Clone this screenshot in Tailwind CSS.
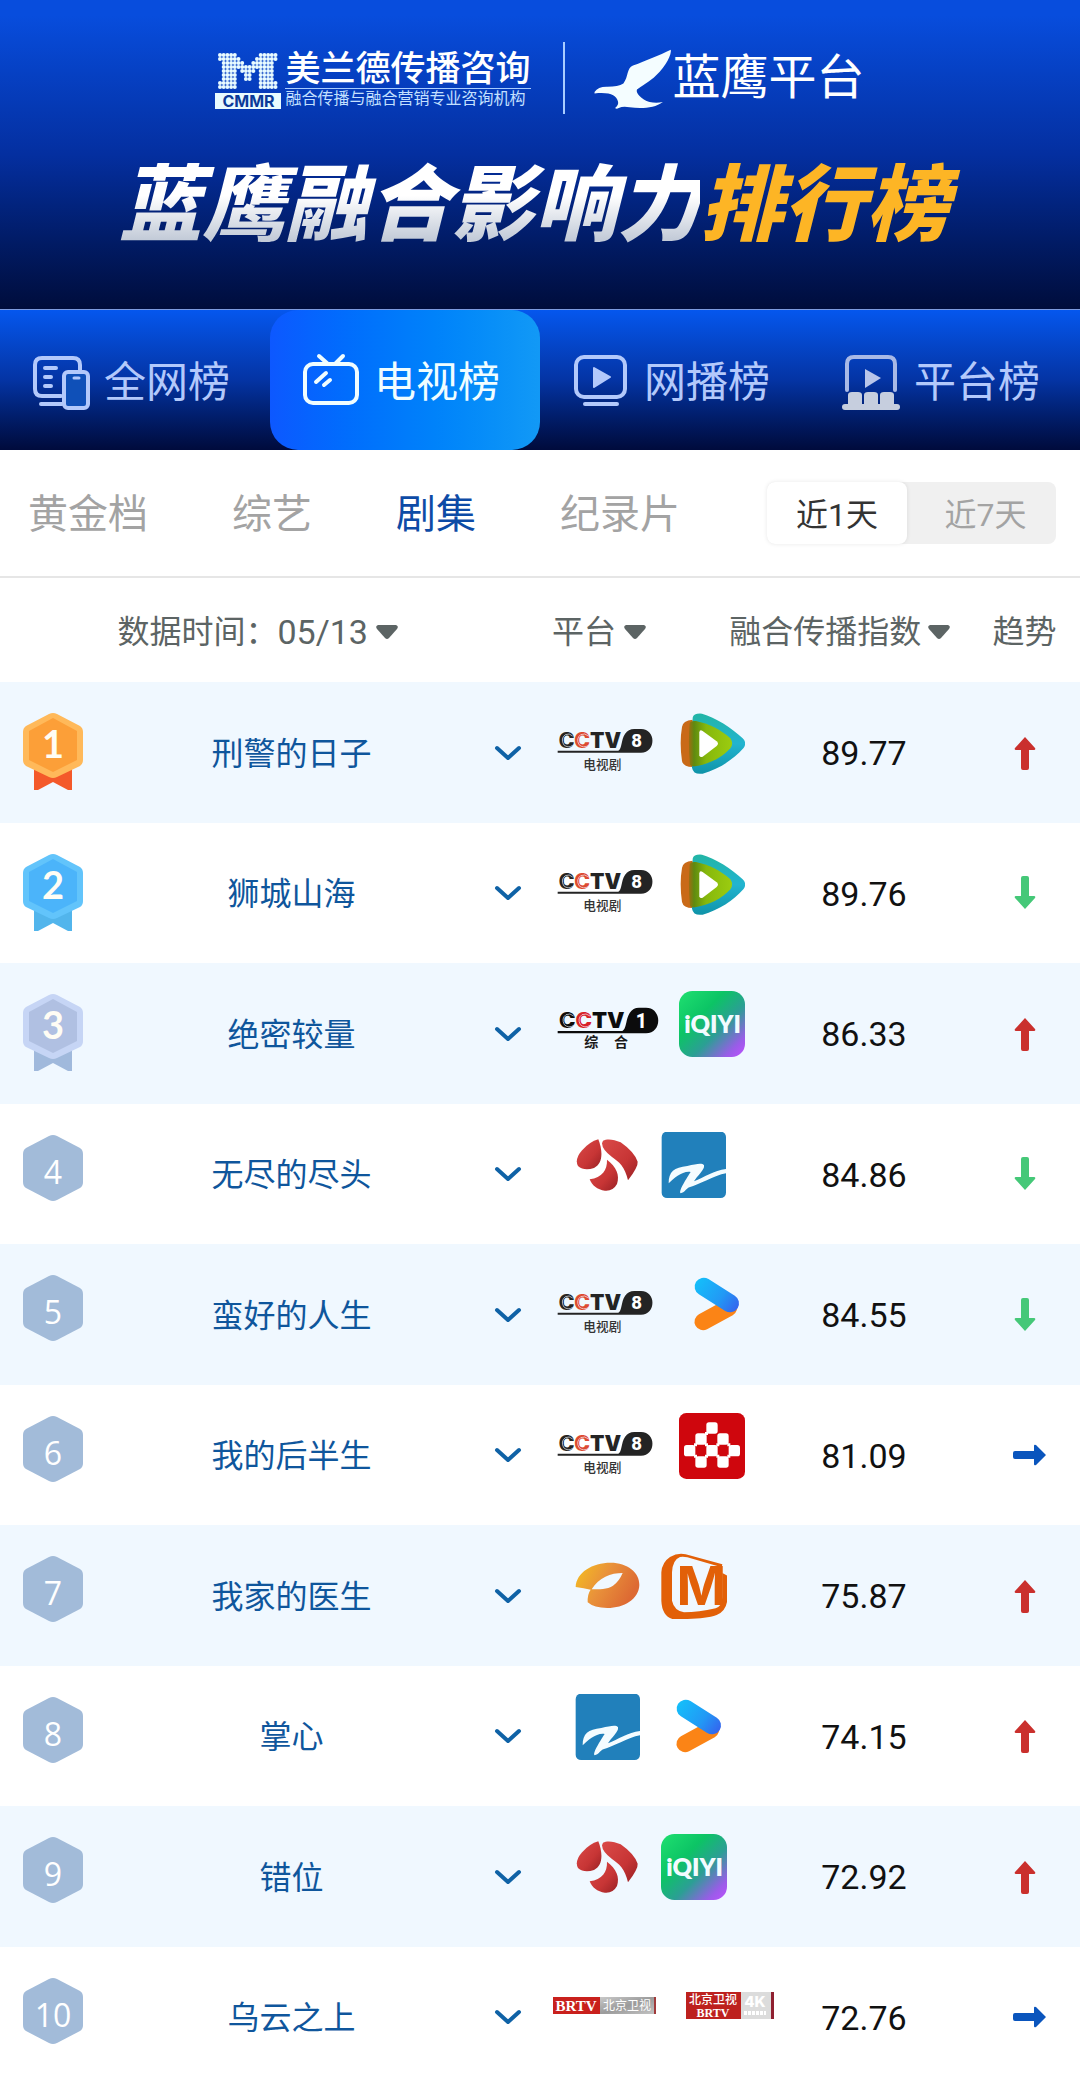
<!DOCTYPE html>
<html lang="zh-CN">

<head>
    <meta charset="UTF-8" />
    <meta name="viewport" content="width=device-width, initial-scale=1.0" />
    <title>蓝鹰融合影响力排行榜</title>
    <script src="https://cdn.jsdelivr.net/npm/@tailwindcss/browser@4"></script>
    <style>
        body {
            font-family: Roboto, 'Noto Sans CJK SC', sans-serif;
        }
    </style>
</head>

<body class="bg-white">
    <!-- Degradados de los logos -->
    <svg class="absolute w-0 h-0" aria-hidden="true">
        <defs>
            <linearGradient id="g-iqiyi" x1="0" y1="0" x2="1" y2="1">
                <stop offset="0" stop-color="#1fe070" />
                <stop offset="0.35" stop-color="#0cc465" />
                <stop offset="0.6" stop-color="#2b9f94" />
                <stop offset="0.85" stop-color="#9a5ce8" />
                <stop offset="1" stop-color="#c050ff" />
            </linearGradient>
            <linearGradient id="g-youku" gradientUnits="userSpaceOnUse" x1="475" y1="90" x2="600" y2="180">
                <stop offset="0" stop-color="#14c0fa" />
                <stop offset="0.6" stop-color="#2299f5" />
                <stop offset="1" stop-color="#3563ee" />
            </linearGradient>
            <linearGradient id="g-hunan" x1="0" y1="0" x2="1" y2="0.4">
                <stop offset="0" stop-color="#f5c020" />
                <stop offset="0.5" stop-color="#e9923a" />
                <stop offset="1" stop-color="#dd6a33" />
            </linearGradient>
            <linearGradient id="g-teal" x1="0" y1="0" x2="0" y2="1">
                <stop offset="0" stop-color="#22b5a5" />
                <stop offset="0.5" stop-color="#22b4d0" />
                <stop offset="1" stop-color="#0f93a8" />
            </linearGradient>
            <linearGradient id="g-green" x1="0" y1="0" x2="1" y2="0">
                <stop offset="0" stop-color="#a06c12" />
                <stop offset="0.12" stop-color="#5f8a10" />
                <stop offset="0.4" stop-color="#86b80c" />
                <stop offset="1" stop-color="#9ccc10" />
            </linearGradient>
            <linearGradient id="g-red" x1="0" y1="0" x2="1" y2="1">
                <stop offset="0" stop-color="#da4a48" />
                <stop offset="0.6" stop-color="#c73535" />
                <stop offset="1" stop-color="#982024" />
            </linearGradient>
            <linearGradient id="g-silver" x1="0" y1="0" x2="1" y2="1">
                <stop offset="0" stop-color="#c9c9c9" />
                <stop offset="0.5" stop-color="#9b9b9b" />
                <stop offset="1" stop-color="#c4c4c4" />
            </linearGradient>
        </defs>
    </svg>

    <header class="bg-linear-to-b from-[#084ddd] from-5% via-[#042fa0] via-50% to-[#000d3c] border-b border-[#7d9be0] pt-[42px] pb-[51px]">
        <div class="flex justify-center items-center text-white">
            <div class="flex items-end gap-1 pt-1">
                <div class="flex flex-col items-center gap-1">
                    <svg id="logo-dots" class="w-[60px] h-[36px]" viewBox="0 0 60 36" fill="#e8fbff"></svg>
                    <span class="w-[66px] h-4 bg-[#e8fbff] text-[#0a3a98] text-center text-base leading-4 font-bold font-['Inter']">CMMR</span>
                </div>
                <div>
                    <p class="text-[35px] leading-9 font-medium">美兰德传播咨询</p>
                    <p class="border-t border-[#a8ccff] text-base leading-5 text-[#c4e0ff]">融合传播与融合营销专业咨询机构</p>
                </div>
            </div>
            <div class="w-0.5 h-[72px] bg-[#a8ccff] ml-8 mr-7"></div>
            <svg class="w-[80px] h-[63px]" viewBox="155 30 240 190" fill="#f4fdff">
                <path d="M159 166Q170 149 198 150Q230 150 246 140C262 120 255 95 275 86C310 72 355 55 389 38C392 50 375 88 345 115C325 135 300 148 287 158C282 168 300 188 325 196Q345 201 365 196C340 215 300 217 265 212Q245 208 232 214Q225 218 221 214Q232 205 230 195C225 175 205 165 159 170Z" />
            </svg>
            <p class="text-5xl leading-14">蓝鹰平台</p>
        </div>
        <h1 class="mt-10 pr-3 text-center text-[83px] leading-[104px] font-black italic whitespace-nowrap"><span class="bg-linear-to-b from-white from-40% to-[#c3cbd8] to-85% bg-clip-text text-transparent">蓝鹰融合影响力</span><span class="text-[#fdb525]">排行榜</span></h1>
    </header>

    <nav class="grid grid-cols-4 h-[140px] bg-linear-to-b from-[#0557ee] via-[#0434a4] via-50% to-[#000b3c] text-[42px] text-[#b3c9fb]">
        <button class="flex items-center justify-center gap-3.5 pt-1 pr-2">
            <svg class="w-[58px] h-[58px]" viewBox="0 0 58 58" fill="none" stroke="currentColor" stroke-width="4" stroke-linecap="round">
                <path d="M48 18V12Q48 5 41 5H10Q3 5 3 12V36Q3 43 10 43H29M13 15H24M13 24H19M13 33H19M9 51H30" />
                <rect x="32" y="19" width="24" height="36" rx="4" fill="#0f50b8" />
                <path d="M42 25H47" stroke-width="3" />
            </svg>
            全网榜
        </button>
        <button class="flex items-center justify-center gap-3.5 pt-1 pr-2 rounded-[28px] bg-linear-to-r from-[#0d58ff] to-[#1299f6] text-[#f0fdff]">
            <svg class="w-[58px] h-[58px]" viewBox="0 0 58 58" fill="none" stroke="currentColor" stroke-width="4" stroke-linecap="round">
                <rect x="3" y="11" width="52" height="39" rx="8" />
                <path d="M17 3L26 11M41 3L33 11M14 29L24 20M22 32L28 27" />
            </svg>
            电视榜
        </button>
        <button class="flex items-center justify-center gap-3.5 pt-1 pr-2">
            <svg class="w-[58px] h-[58px]" viewBox="0 0 58 58" fill="none" stroke="currentColor" stroke-width="4" stroke-linecap="round">
                <rect x="4" y="4" width="49" height="40" rx="8" />
                <path d="M13 51H45" />
                <path d="M22 15L38 24L22 34Z" fill="currentColor" stroke-width="2" stroke-linejoin="round" />
            </svg>
            网播榜
        </button>
        <button class="flex items-center justify-center gap-3.5 pt-1 pr-2">
            <svg class="w-[58px] h-[58px]" viewBox="0 0 58 58" fill="none" stroke="#a9b9e6" stroke-width="4" stroke-linecap="round">
                <path d="M5 37V11Q5 4 12 4H46Q53 4 53 11V37" />
                <path d="M23 16L39 25L23 35Z" fill="#b9c6ea" stroke="none" />
                <path d="M3 54H55" stroke="#c6cede" stroke-width="6" />
                <path d="M6 42Q6 39 10 39H16Q20 39 20 42V52H6ZM22 42Q22 39 26 39H32Q36 39 36 42V52H22ZM38 42Q38 39 42 39H48Q52 39 52 42V52H38Z" fill="#c6cede" stroke="none" />
            </svg>
            平台榜
        </button>
    </nav>

    <div class="flex items-center justify-between h-32 pl-7 pr-6 border-b-2 border-[#e6e6e6] text-[40px] text-[#a3a3a3]">
        <div class="flex gap-[84px] pt-1">
            <button>黄金档</button>
            <button>综艺</button>
            <button class="text-[#0d4ba6]">剧集</button>
            <button>纪录片</button>
        </div>
        <div class="flex items-center rounded-lg bg-[#f0f0f0] text-[32px]">
            <button class="w-[140px] h-[62px] pt-1 rounded-lg bg-white text-[#333333] shadow-[0_0_4px_#00000018]">近1天</button>
            <button class="w-[149px] h-[60px] pt-1 pl-2">近7天</button>
        </div>
    </div>

    <table class="w-full table-fixed text-center">
        <colgroup>
            <col class="w-[10%]" />
            <col class="w-[34%]" />
            <col class="w-[6%]" />
            <col class="w-[21%]" />
            <col class="w-[18%]" />
            <col class="w-[11%]" />
        </colgroup>
        <thead class="text-[32px] text-[#5c6464] whitespace-nowrap">
            <tr class="h-[104px]">
                <th colspan="3" class="pt-1 font-normal">
                    <div class="flex items-center justify-center gap-1.5 pr-6">
                        <span class="flex items-center"><label for="fecha">数据时间：</label><select id="fecha" class="appearance-none text-[34px]"><option>05/13</option></select></span>
                        <svg class="w-6 h-4" viewBox="0 0 24 16" fill="currentColor"><path d="M3 1H21Q24 2 22 5L14 14Q12 16 10 14L2 5Q0 2 3 1Z" /></svg>
                    </div>
                </th>
                <th class="pt-1 font-normal">
                    <div class="flex items-center gap-1.5 pl-3">
                        <select aria-label="平台" class="appearance-none"><option>平台</option></select>
                        <svg class="w-6 h-4" viewBox="0 0 24 16" fill="currentColor"><path d="M3 1H21Q24 2 22 5L14 14Q12 16 10 14L2 5Q0 2 3 1Z" /></svg>
                    </div>
                </th>
                <th class="pt-1 font-normal">
                    <div class="flex justify-end pr-2.5">
                        <button class="flex shrink-0 items-center gap-1.5">融合传播指数
                            <svg class="w-6 h-4" viewBox="0 0 24 16" fill="currentColor"><path d="M3 1H21Q24 2 22 5L14 14Q12 16 10 14L2 5Q0 2 3 1Z" /></svg>
                        </button>
                    </div>
                </th>
                <th class="pt-1 pl-2 font-normal">趋势</th>
            </tr>
        </thead>
        <tbody id="ranking-body"></tbody>
    </table>

    <script>
        // Puntos del logotipo
        const puntos = [
            "11111......11111",
            "111111....111111",
            ".111111..111111.",
            ".11111111111111.",
            ".1111.1111.1111.",
            ".1111..11..1111.",
            ".1111..11..1111.",
            "11111......11111",
            "11111......11111"
        ];
        document.getElementById("logo-dots").innerHTML = puntos.map((fila, y) =>
            [...fila].map((p, x) => p === "1" ? `<circle cx="${2 + x * 3.7}" cy="${2 + y * 4}" r="2" />` : "").join("")
        ).join("");

        // Logos de plataformas
        const logos = {
            cctv8: `<svg class="w-[102px] h-[66px] shrink-0" viewBox="54 27 306 198">
                <text x="59" y="140" font-family="Inter, sans-serif" font-weight="900" font-size="63" fill="#242424">C<tspan fill="#dd4a33">C</tspan>TV</text>
                <g fill="none" stroke="#f4f8fc" stroke-width="2">
                    <path d="M101 105Q91 95 79 101Q64 112 74 131Q87 143 101 133" />
                    <path d="M149 105Q137 95 125 101Q110 112 120 131Q133 143 149 133" />
                </g>
                <path d="M56 149H238C249 145 246 116 258 99Q268 84 286 84H306C352 84 352 155 306 155H56Z" fill="#242424" />
                <text x="293" y="138" text-anchor="middle" font-family="Roboto, sans-serif" font-weight="800" font-size="56" fill="#fff">8</text>
                <text x="190" y="203" text-anchor="middle" font-family="'Noto Sans CJK SC', sans-serif" font-weight="500" font-size="38" fill="#333">电视剧</text>
            </svg>`,
            cctv1: `<svg class="w-[102px] h-[66px] shrink-0" viewBox="46 63 306 198">
                <text x="52" y="173" font-family="Inter, sans-serif" font-weight="900" font-size="66" fill="#0c0c0c">C<tspan fill="#d8202a">C</tspan>TV</text>
                <g fill="none" stroke="#f4f8fc" stroke-width="2">
                    <path d="M96 138Q85 128 73 134Q58 145 68 164Q81 176 96 166" />
                    <path d="M145 138Q133 128 121 134Q106 145 116 164Q129 176 145 166" />
                </g>
                <path d="M48 183H242C255 177 252 147 264 129Q274 113 292 113H313C362 113 362 190 313 190H48Z" fill="#0c0c0c" />
                <text x="299" y="173" text-anchor="middle" font-family="Roboto, sans-serif" font-weight="800" font-size="58" fill="#fff">1</text>
                <g font-family="'Noto Sans CJK SC', sans-serif" font-weight="700" font-size="42" fill="#1a1a1a">
                    <text x="128" y="231">综</text>
                    <text x="217" y="231">合</text>
                </g>
            </svg>`,
            tencent: `<svg class="w-[66px] h-[66px] shrink-0" viewBox="421 27 198 198">
                <path d="M462 56Q432 58 430 78Q422 125 430 180Q434 198 462 198Z" fill="#c96a18" />
                <path d="M462 50Q465 36 490 38C530 50 580 80 612 112Q626 126 614 142C585 175 540 205 492 218Q464 222 460 200Z" fill="url(#g-teal)" />
                <path d="M453 68Q454 58 472 60C510 68 545 85 575 112Q586 128 575 142C550 170 515 188 470 196Q456 198 454 190Q448 128 453 68Z" fill="url(#g-green)" />
                <path d="M482 94Q483 84 492 90L534 121Q542 128 534 135L492 167Q483 171 482 163Z" fill="#fff" />
            </svg>`,
            iqiyi: `<svg class="w-[66px] h-[66px] shrink-0" viewBox="421 63 198 198">
                <rect x="421" y="63" width="198" height="198" rx="40" fill="url(#g-iqiyi)" />
                <text x="522" y="188" text-anchor="middle" font-family="Lato, sans-serif" font-weight="800" font-size="72" fill="#f2fbff">iQIYI</text>
            </svg>`,
            jiangsu: `<svg class="w-[66px] h-[66px] shrink-0" viewBox="108 486 198 198" fill="url(#g-red)">
                <path d="M178 508C192 545 192 580 165 594Q135 604 117 588Q106 568 128 542Q152 515 178 508Z" />
                <path d="M192 512C205 505 225 508 245 517Q285 545 296 575Q298 590 267 631C258 590 240 575 218 560Q190 540 189 520Z" />
                <path d="M204 569C232 590 243 615 234 642Q222 664 198 662C175 660 158 645 152 628C190 622 205 600 204 569Z" />
            </svg>`,
            zhejiang: `<svg class="w-[66px] h-[66px] shrink-0" viewBox="361 486 198 198">
                <rect x="363" y="485" width="193" height="199" rx="16" fill="#2180bb" />
                <path d="M384 640C384 605 400 592 440 588C468 582 484 578 490 586C494 598 468 620 460 634C490 622 520 602 556 597V610C520 616 475 645 446 652C436 656 432 668 420 670C412 664 440 622 450 606C425 602 400 625 384 640Z" fill="#f4fcff" />
            </svg>`,
            youku: `<svg class="w-[66px] h-[66px] shrink-0" viewBox="423 69 198 198" fill="none" stroke-linecap="round">
                <path d="M495 218L572 176" stroke="#fb8416" stroke-width="51" />
                <path d="M497 113L576 163" stroke="url(#g-youku)" stroke-width="54" />
            </svg>`,
            yangshipin: `<svg class="w-[66px] h-[66px] shrink-0" viewBox="423 490 198 198" fill="#fff">
                <rect x="423" y="490" width="198" height="198" rx="22" fill="#cf060d" />
                <rect x="505" y="518" width="34" height="34" rx="8" />
                <rect x="472" y="551" width="34" height="34" rx="8" />
                <rect x="538" y="551" width="34" height="34" rx="8" />
                <rect x="438" y="586" width="34" height="34" rx="8" />
                <rect x="505" y="586" width="34" height="34" rx="8" />
                <rect x="572" y="586" width="34" height="34" rx="8" />
                <rect x="472" y="620" width="34" height="34" rx="8" />
                <rect x="538" y="620" width="34" height="34" rx="8" />
                <path d="M501 547h9v9h-9zM535 581h9v9h-9zM501 581h9v9h-9zM468 581h9v9h-9zM568 581h9v9h-9zM468 615h9v9h-9zM501 615h9v9h-9zM535 615h9v9h-9zM568 615h9v9h-9z" />
            </svg>`,
            hunan: `<svg class="w-[66px] h-[66px] shrink-0" viewBox="108 72 198 198">
                <path fill-rule="evenodd" d="M110 174C112 130 160 101 215 101C265 101 302 130 301 168C300 210 255 237 205 237Q165 237 146 220Q145 195 155 182Q135 178 110 174ZM158 181C180 180 205 182 222 170Q240 158 251 132C215 132 180 145 158 181Z" fill="url(#g-hunan)" />
            </svg>`,
            mango: `<svg class="w-[66px] h-[66px] shrink-0" viewBox="361 72 198 198" fill="#e26008">
                <path d="M545 106L435 76Q412 70 388 84Q364 100 362 130V215Q364 260 395 270H440C480 268 505 266 528 258Q558 245 560 210V140L545 132V205Q544 232 525 238C490 246 460 250 430 250Q400 244 394 215V130Q396 92 418 84Q428 82 440 85L543 115Z" />
                <text x="482" y="228" text-anchor="middle" font-family="Inter, sans-serif" font-weight="700" font-size="160">M</text>
            </svg>`,
            brtv: `<svg class="w-[103px] h-[66px] shrink-0" viewBox="0 0 103 66">
                <rect x="0" y="22" width="47" height="17" fill="#c9201c" />
                <rect x="47" y="22" width="56" height="17" fill="url(#g-silver)" />
                <rect x="101" y="22" width="2" height="17" fill="#a03a3a" />
                <text x="23" y="36" text-anchor="middle" font-family="'Liberation Serif', serif" font-weight="700" font-size="15" fill="#fff">BRTV</text>
                <text x="74" y="35" text-anchor="middle" font-family="'Noto Sans CJK SC', sans-serif" font-size="12" fill="#fff">北京卫视</text>
            </svg>`,
            brtv4k: `<svg class="w-[98px] h-[66px] shrink-0" viewBox="0 0 98 66">
                <rect x="10" y="17" width="55" height="27" fill="#bd211e" />
                <rect x="65" y="17" width="30" height="27" fill="#dcdcdc" />
                <rect x="95" y="17" width="3" height="27" fill="#8f2030" />
                <text x="37" y="29" text-anchor="middle" font-family="'Noto Sans CJK SC', sans-serif" font-weight="500" font-size="12" fill="#fff">北京卫视</text>
                <text x="37" y="42" text-anchor="middle" font-family="'Liberation Serif', serif" font-weight="700" font-size="12" fill="#fff">BRTV</text>
                <text x="79" y="32" text-anchor="middle" font-family="Inter, sans-serif" font-weight="800" font-size="15" fill="#fff">4K</text>
                <path d="M68 38H90" stroke="#fff" stroke-width="4" stroke-dasharray="3 1" />
            </svg>`
        };

        const series = [
            { nombre: "刑警的日子", logos: ["cctv8", "tencent"], indice: "89.77", tendencia: "up" },
            { nombre: "狮城山海", logos: ["cctv8", "tencent"], indice: "89.76", tendencia: "down" },
            { nombre: "绝密较量", logos: ["cctv1", "iqiyi"], indice: "86.33", tendencia: "up" },
            { nombre: "无尽的尽头", logos: ["jiangsu", "zhejiang"], indice: "84.86", tendencia: "down" },
            { nombre: "蛮好的人生", logos: ["cctv8", "youku"], indice: "84.55", tendencia: "down" },
            { nombre: "我的后半生", logos: ["cctv8", "yangshipin"], indice: "81.09", tendencia: "same" },
            { nombre: "我家的医生", logos: ["hunan", "mango"], indice: "75.87", tendencia: "up" },
            { nombre: "掌心", logos: ["zhejiang", "youku"], indice: "74.15", tendencia: "up" },
            { nombre: "错位", logos: ["jiangsu", "iqiyi"], indice: "72.92", tendencia: "up" },
            { nombre: "乌云之上", logos: ["brtv", "brtv4k"], indice: "72.76", tendencia: "same" }
        ];

        const medallas = [
            { borde: "#ffb95a", fondo: "#fc9f38", cinta: "#f4592a" },
            { borde: "#62c4fb", fondo: "#4bb4fa", cinta: "#52b5ec" },
            { borde: "#c6d5f5", fondo: "#b0c0e2", cinta: "#a0b9dc" }
        ];

        const insignia = (puesto) => {
            const m = medallas[puesto - 1];
            if (!m) {
                return `<svg class="w-[62px] h-[80px]" viewBox="0 0 62 80">
                    <path d="M27 2Q31 0 35 2L58 14Q61 16 61 20V48Q61 52 58 54L35 66Q31 68 27 66L4 54Q1 52 1 48V20Q1 16 4 14Z" fill="#a2bbd9" />
                    <text x="31" y="50" text-anchor="middle" font-family="'Open Sans', sans-serif" font-weight="500" font-size="32" fill="#fff">${puesto}</text>
                </svg>`;
            }
            return `<svg class="w-[62px] h-[80px]" viewBox="0 0 62 80">
                <path d="M12 54H50V78H46L31 70L16 78H12Z" fill="${m.cinta}" />
                <path d="M27 2Q31 0 35 2L58 14Q61 16 61 20V48Q61 52 58 54L35 65Q31 67 27 65L4 54Q1 52 1 48V20Q1 16 4 14Z" fill="${m.borde}" />
                <path d="M31 6L55 19V48L31 60L7 48V19Z" fill="${m.fondo}" />
                <text x="31" y="46" text-anchor="middle" font-family="Lato, sans-serif" font-weight="700" font-size="38" fill="#fffdf4">${puesto}</text>
            </svg>`;
        };

        const flechas = {
            up: `<svg class="w-[34px] h-[34px]" viewBox="0 0 34 34"><path d="M12 1L22 12Q23 14 21 14H16V32Q16 34 14 34H10Q8 34 8 32V14H3Q1 14 2 12Z" fill="#ca302d" /></svg>`,
            down: `<svg class="w-[34px] h-[34px]" viewBox="0 0 34 34"><path d="M12 33L22 22Q23 20 21 20H16V2Q16 0 14 0H10Q8 0 8 2V20H3Q1 20 2 22Z" fill="#45c878" /></svg>`,
            same: `<svg class="w-[34px] h-[34px]" viewBox="0 0 34 34"><path d="M33 17L23 27Q21 28 21 26V21H2Q0 21 0 19V15Q0 13 2 13H21V8Q21 6 23 7Z" fill="#0a55bd" /></svg>`
        };

        document.getElementById("ranking-body").innerHTML = series.map((s, i) => `
            <tr class="h-[141px] even:h-[140px] odd:bg-[#f0f8ff]">
                <td class="align-top pt-[30px] pl-[22px]">${insignia(i + 1)}</td>
                <td class="pt-0.5 text-[32px] text-[#0f569c]">${s.nombre}</td>
                <td>
                    <button aria-label="展开" class="block mx-auto">
                        <svg class="w-7 h-4" viewBox="0 0 28 16" fill="none" stroke="#0f62a6" stroke-width="4" stroke-linecap="round" stroke-linejoin="round"><path d="M3 3L14 13L25 3" /></svg>
                    </button>
                </td>
                <td class="align-top pt-7">
                    <div class="flex justify-center gap-5 ${s.logos[0] === "brtv" ? "pl-5" : "pr-1"}">
                        ${s.logos.map(l => logos[l]).join("")}
                    </div>
                </td>
                <td class="pt-0.5 text-[34px] text-[#111111]">${s.indice}</td>
                <td class="pl-[52px]">${flechas[s.tendencia]}</td>
            </tr>`).join("");
    </script>
</body>

</html>
